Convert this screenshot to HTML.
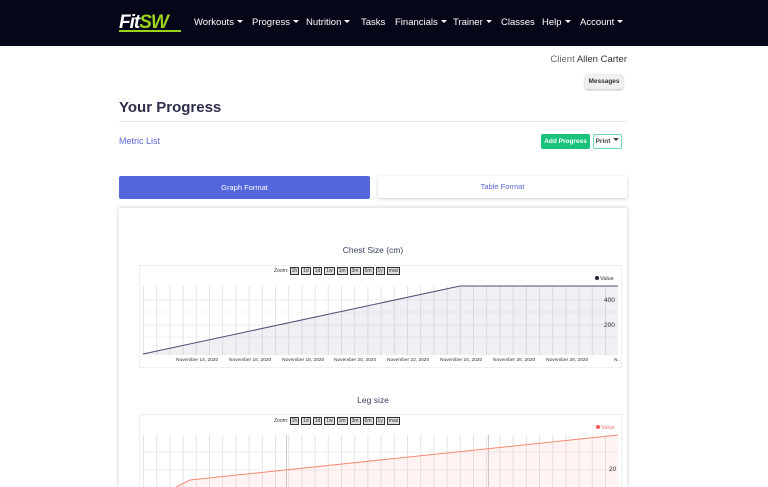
<!DOCTYPE html><html><head><style>
html,body{margin:0;width:768px;height:487px;overflow:hidden}
body{background:#fff;font-family:"Liberation Sans",sans-serif;position:relative}
.a{position:absolute}
.nav{left:0;top:0;width:768px;height:46px;background:#050719}
.nav span{position:absolute;top:17px;color:#fff;font-size:9.5px;white-space:nowrap}
.car:after{content:"";display:inline-block;margin-left:3px;border:3px solid transparent;border-top:3px solid currentColor;border-bottom:0;vertical-align:2px}
.zb{display:inline-block;border:1px solid #333;background:#ddd;font-size:5px;padding:0 1px;margin-right:2px;line-height:6px}
</style></head><body>
<div class="a nav">
<div class="a" style="left:119px;top:12px;font-style:italic;font-weight:bold;font-size:19px;color:#fff;letter-spacing:-1px">Fit<b style="color:#9ad21b">SW</b></div>
<div class="a" style="left:119px;top:30px;width:62px;height:2px;background:#9ad21b"></div>
<span class="car" style="left:194px">Workouts</span>
<span class="car" style="left:252px">Progress</span>
<span class="car" style="left:306px">Nutrition</span>
<span style="left:361px">Tasks</span>
<span class="car" style="left:395px">Financials</span>
<span class="car" style="left:453px">Trainer</span>
<span style="left:501px">Classes</span>
<span class="car" style="left:542px">Help</span>
<span class="car" style="left:580px">Account</span>
</div>
<div class="a" style="right:141px;top:54px;font-size:9.5px;color:#666;white-space:nowrap">Client <span style="color:#333">Allen Carter</span></div>
<div class="a" style="left:585px;top:74px;width:38px;height:15px;background:#f0f0f2;border-radius:3px;box-shadow:0 1px 2px #bbb;font-size:6.5px;font-weight:bold;color:#333;text-align:center;line-height:15px">Messages</div>
<div class="a" style="left:119px;top:99px;font-size:15px;font-weight:bold;color:#2d2f4a">Your Progress</div>
<div class="a" style="left:119px;top:121px;width:508px;height:1px;background:#e8e8ec"></div>
<div class="a" style="left:119px;top:136px;font-size:9px;color:#5c66d6">Metric List</div>
<div class="a" style="left:541px;top:134px;width:49px;height:15px;background:#19c37a;border-radius:2px;color:#fff;font-size:6.5px;font-weight:bold;text-align:center;line-height:15px">Add Progress</div>
<div class="a" style="left:593px;top:134px;width:27px;height:13px;border:1px solid #6ee0b0;border-radius:2px;font-size:6.5px;font-weight:bold;color:#444;line-height:13px;text-align:center"><span class="car">Print</span></div>
<div class="a" style="left:119px;top:176px;width:251px;height:23px;background:#5366dc;border-radius:2px;color:#fff;font-size:7.5px;text-align:center;line-height:23px">Graph Format</div>
<div class="a" style="left:378px;top:176px;width:249px;height:22px;background:#fff;border-radius:2px;box-shadow:0 1px 3px #ccc;color:#5c66d6;font-size:7.5px;text-align:center;line-height:22px">Table Format</div>
<div class="a" style="left:119px;top:208px;width:508px;height:279px;background:#fff;box-shadow:0 0 5px #ccc"></div>
<div class="a" style="left:119px;top:245px;width:508px;text-align:center;font-size:8.5px;color:#3a4060">Chest Size (cm)</div>
<div class="a" style="left:119px;top:395px;width:508px;text-align:center;font-size:8.5px;color:#3a4060">Leg size</div>
<svg class="a" style="left:0;top:0" width="768" height="487">
<defs>
<pattern id="g" x="143" y="0" width="13.2" height="487" patternUnits="userSpaceOnUse"><line x1="0.5" y1="0" x2="0.5" y2="487" stroke="#e4e4e8"/></pattern>
</defs>
<rect x="139.5" y="265.5" width="482" height="102" fill="#fff" stroke="#eee"/>
<rect x="143" y="286" width="475" height="69" fill="url(#g)"/>
<line x1="143" y1="300" x2="618" y2="300" stroke="#eee"/><line x1="143" y1="325" x2="618" y2="325" stroke="#eee"/><line x1="143" y1="312" x2="618" y2="312" stroke="#f3f3f3"/><line x1="143" y1="337" x2="618" y2="337" stroke="#f3f3f3"/>
<polygon points="143,354 460,286 618,286 618,355 143,355" fill="rgba(60,70,110,0.08)"/>
<polyline points="143,354 460,286 618,286" fill="none" stroke="#4a5075" stroke-width="1"/>
<circle cx="597" cy="278" r="2" fill="#223"/><text x="600" y="280" font-size="5.5" fill="#333" font-family="Liberation Sans">Value</text>
<text x="604" y="302" font-size="6.5" fill="#333" font-family="Liberation Sans">400</text>
<text x="604" y="327" font-size="6.5" fill="#333" font-family="Liberation Sans">200</text>
<g font-size="4.8" fill="#333" font-family="Liberation Sans">
<text x="176" y="361">November 14, 2020</text><text x="229" y="361">November 16, 2020</text><text x="282" y="361">November 18, 2020</text><text x="334" y="361">November 20, 2020</text><text x="387" y="361">November 22, 2020</text><text x="440" y="361">November 24, 2020</text><text x="493" y="361">November 26, 2020</text><text x="546" y="361">November 28, 2020</text><text x="614" y="361">N..</text></g>
<rect x="139.5" y="414.5" width="482" height="80" fill="#fff" stroke="#eee"/>
<rect x="143" y="435" width="475" height="60" fill="url(#g)"/>
<line x1="143" y1="452" x2="618" y2="452" stroke="#eee"/><line x1="143" y1="470" x2="618" y2="470" stroke="#eee"/>
<line x1="286.5" y1="435" x2="286.5" y2="487" stroke="#ccc"/><line x1="488.5" y1="435" x2="488.5" y2="487" stroke="#ccc"/>
<polygon points="176,487 190,480 618,435 618,487" fill="rgba(255,120,90,0.08)"/>
<polyline points="176,487 190,480 618,435" fill="none" stroke="#f58a70" stroke-width="1"/>
<circle cx="598" cy="427" r="2" fill="#f55"/><text x="601" y="429" font-size="5.5" fill="#f77" font-family="Liberation Sans">Value</text>
<text x="609" y="471" font-size="6.5" fill="#333" font-family="Liberation Sans">20</text>
</svg>
<div class="a" style="left:274px;top:267px;font-size:5px;color:#333">Zoom: <span class="zb">1h</span><span class="zb">1d</span><span class="zb">1d</span><span class="zb">1w</span><span class="zb">1m</span><span class="zb">3m</span><span class="zb">6m</span><span class="zb">1y</span><span class="zb">max</span></div>
<div class="a" style="left:274px;top:417px;font-size:5px;color:#333">Zoom: <span class="zb">1h</span><span class="zb">1d</span><span class="zb">1d</span><span class="zb">1w</span><span class="zb">1m</span><span class="zb">3m</span><span class="zb">6m</span><span class="zb">1y</span><span class="zb">max</span></div>
</body></html>
